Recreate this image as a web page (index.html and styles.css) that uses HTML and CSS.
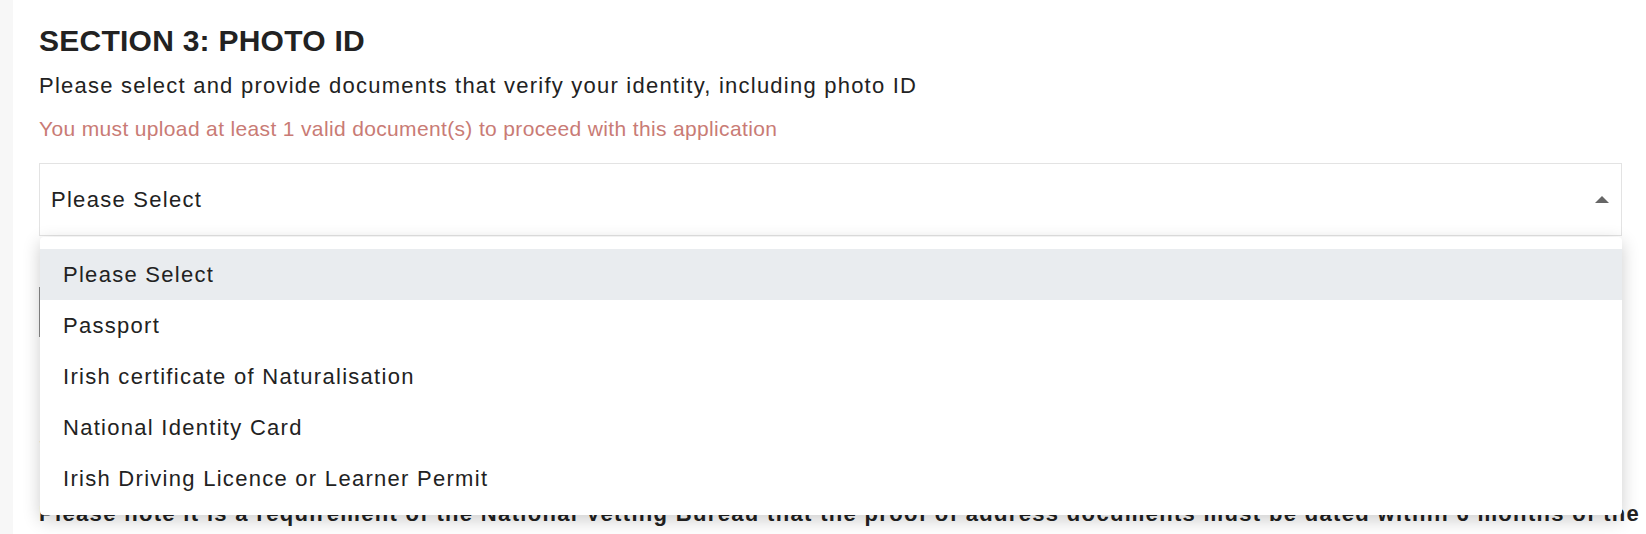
FILE: index.html
```html
<!DOCTYPE html>
<html lang="en">
<head>
<meta charset="utf-8">
<title>Section 3: Photo ID</title>
<link rel="stylesheet" href="styles.css">
</head>
<body>
<div class="page">
  <main class="card">
    <h2 class="section-title">SECTION 3: PHOTO ID</h2>
    <p class="intro">Please select and provide documents that verify your identity, including photo ID</p>
    <p class="error">You must upload at least 1 valid document(s) to proceed with this application</p>

    <div class="select-wrap">
      <div class="select">
        <span class="select-value">Please Select</span>
        <span class="caret"></span>
      </div>
      <ul class="menu">
        <li class="menu-item active">Please Select</li>
        <li class="menu-item">Passport</li>
        <li class="menu-item">Irish certificate of Naturalisation</li>
        <li class="menu-item">National Identity Card</li>
        <li class="menu-item">Irish Driving Licence or Learner Permit</li>
      </ul>
    </div>

    <div class="upload-box"></div>
    <p class="sub">Supporting documents</p>
    <p class="note">Please note it is a requirement of the National Vetting Bureau that the proof of address documents must be dated within 6 months of the date of application</p>
  </main>
</div>
</body>
</html>
```
FILE: styles.css
```css
html, body {
  margin: 0;
  padding: 0;
  background: #f7f7f7;
  font-family: "Liberation Sans", Arial, Helvetica, sans-serif;
  color: #222;
  overflow: hidden;
}

.page {
  padding-left: 13px;
  height: 534px;
  overflow: hidden;
}

.card {
  background: #fff;
  height: 100%;
  padding: 23px 0 0 26px;
  box-sizing: border-box;
  overflow: hidden;
}

.section-title {
  margin: 0;
  font-size: 30px;
  line-height: 36px;
  font-weight: 700;
  letter-spacing: 0.25px;
  color: #222;
}

.intro {
  margin: 12px 0 0;
  font-size: 22px;
  line-height: 30px;
  letter-spacing: 1.23px;
  color: #222;
}

.error {
  margin: 14px 0 0;
  font-size: 21px;
  line-height: 28px;
  letter-spacing: 0.35px;
  color: #c97b75;
}

.select-wrap {
  position: relative;
  width: 1583px;
  margin-top: 20px;
}

.select {
  height: 73px;
  box-sizing: border-box;
  border: 1px solid #e3e3e3;
  display: flex;
  align-items: center;
  justify-content: space-between;
  padding: 0 12px 0 11px;
  font-size: 22px;
  letter-spacing: 1.28px;
  color: #222;
}

.caret {
  width: 0;
  height: 0;
  border-left: 7px solid transparent;
  border-right: 7px solid transparent;
  border-bottom: 7px solid #666;
}

.menu {
  position: absolute;
  top: 74px;
  left: 1px;
  right: 0;
  margin: 0;
  padding: 12px 0 11px;
  list-style: none;
  background: #fff;
  border-radius: 4px;
  box-shadow: 0 5px 18px rgba(0, 0, 0, 0.2);
  z-index: 10;
}

.menu-item {
  height: 51px;
  line-height: 51px;
  padding-left: 23px;
  font-size: 22px;
  letter-spacing: 1.28px;
  color: #222;
}

.menu-item.active {
  background: #e9ecef;
}

.upload-box {
  margin-top: 51px;
  height: 50px;
  width: 300px;
  box-sizing: border-box;
  border-left: 2px solid #8a8a8a;
  background: #eee;
}

.sub {
  margin: 87px 0 0;
  font-size: 21px;
  line-height: 28px;
}

.note {
  margin: 47px 0 0;
  width: 1615px;
  font-size: 22px;
  line-height: 30px;
  font-weight: 700;
  letter-spacing: 1.33px;
}
```
